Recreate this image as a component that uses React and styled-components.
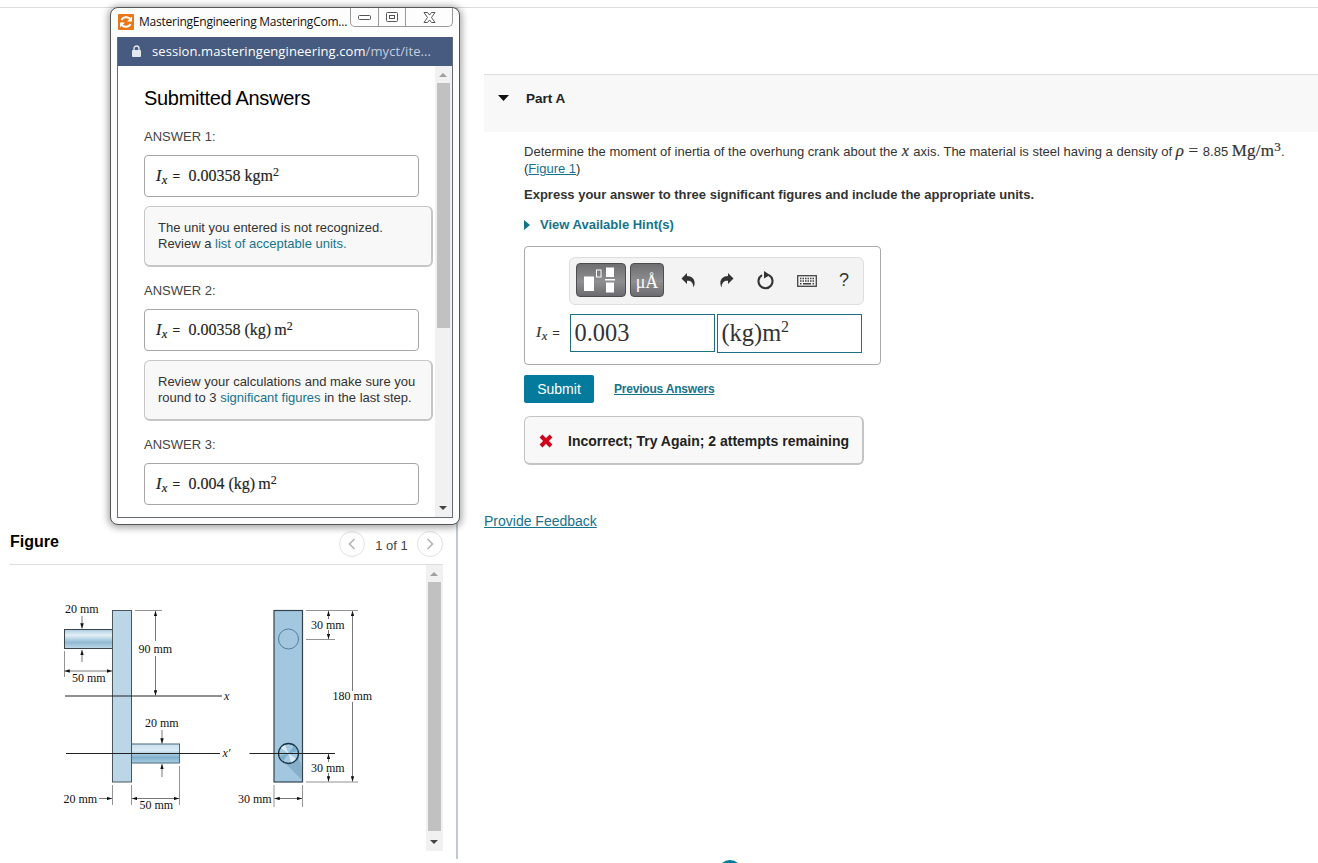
import React from "react";
import styled, { createGlobalStyle } from "styled-components";

const Global = createGlobalStyle`
  * { box-sizing: border-box; }
  body { margin: 0; background: #fff; overflow: hidden; }
`;

const sans = `"Liberation Sans", Arial, sans-serif`;
const serif = `"Liberation Serif", "Times New Roman", serif`;
const ui = `"Open Sans", "Noto Sans", sans-serif`;

const Page = styled.div`
  position: relative;
  width: 1318px;
  height: 863px;
  overflow: hidden;
  padding-top: 7px;
  background: #fff;
  font-family: ${sans};
  font-size: 13px;
  color: #333;
`;
const Columns = styled.div`
  display: flex;
  height: 856px;
  border-top: 1px solid #ddd;
`;

/* ---------- left column: figure ---------- */
const FigurePane = styled.section`
  width: 458px;
  height: 851px;
  border-right: 2px solid #bccad3;
  padding: 517px 13px 0 0;
`;
const FigureHeader = styled.header`
  display: flex;
  align-items: center;
  height: 40px;
  margin-left: 10px;
  border-bottom: 1px solid #ddd;
`;
const FigureTitle = styled.h2`
  flex: 1;
  margin: 0;
  padding-bottom: 5px;
  font: bold 16px/20px ${sans};
  color: #000;
`;
const Pager = styled.div`
  display: flex;
  align-items: center;
  margin-bottom: 2px;
  color: #444;
  span { width: 52px; text-align: center; padding: 3px 0 0 1px; }
`;
const RoundButton = styled.button`
  display: flex;
  align-items: center;
  justify-content: center;
  width: 26px;
  height: 26px;
  padding: 0;
  border: 1px solid #e2e2e2;
  border-radius: 50%;
  background: #fff;
`;
const FigureBody = styled.div`
  display: flex;
  height: 286px;
`;
const Track = styled.div`
  display: flex;
  flex-direction: column;
  align-items: center;
  justify-content: space-between;
  flex: none;
  width: 17px;
  height: 100%;
  background: #f1f1f1;
`;
const Thumb = styled.div`
  width: 13px;
  height: ${(p) => p.$h}px;
  background: #c1c1c1;
  margin-bottom: auto;
`;
const ArrowCell = styled.div`
  display: flex;
  align-items: center;
  justify-content: center;
  height: 17px;
  padding: 0 1px ${(p) => (p.$low ? 0 : 1)}px 0;
`;

/* ---------- right column: question ---------- */
const Question = styled.main`
  flex: 1;
  padding: 66px 0 0 26px;
`;
const PartHeader = styled.header`
  display: flex;
  align-items: flex-start;
  gap: 17px;
  height: 58px;
  padding: 14px 0 0 14px;
  background: #f8f8f8;
  border-top: 1px solid #ddd;
  svg { margin-top: 6px; }
  h1 { margin: 0; font: bold 13.5px/20px ${sans}; color: #222; }
`;
const PartBody = styled.div`
  padding: 10px 0 0 40px;
`;
const Prompt = styled.p`
  margin: 0;
  height: 35px;
  line-height: 17px;
  letter-spacing: 0.01px;
  white-space: nowrap;
`;
const Link = styled.a`
  color: #16738c;
  text-decoration: ${(p) => (p.$plain ? "none" : "underline")};
  font-size: ${(p) => p.$size || 13}px;
  font-weight: ${(p) => (p.$bold ? "bold" : "normal")};
  letter-spacing: ${(p) => (p.$bold ? "-0.2px" : "normal")};
`;
const Instruction = styled.p`
  margin: 9px 0 0;
  font-weight: bold;
  line-height: 17px;
`;
const Hint = styled.div`
  display: flex;
  align-items: center;
  gap: 10px;
  margin-top: 13px;
  font-weight: bold;
  line-height: 17px;
  color: #16738c;
`;
const AnswerPanel = styled.div`
  width: 357px;
  height: 119px;
  margin-top: 13px;
  padding: 10px 0 0 44px;
  border: 1px solid #aaa;
  border-radius: 4px;
`;
const Toolbar = styled.div`
  display: flex;
  align-items: center;
  width: 295px;
  height: 48px;
  padding: 0 6px 2px;
  background: #f3f3f3;
  border: 1px solid #dedede;
  border-radius: 6px;
`;
const DarkButton = styled.button`
  display: flex;
  align-items: center;
  justify-content: center;
  width: ${(p) => p.$w}px;
  height: 34px;
  margin-right: 4px;
  padding: ${(p) => (p.$glyph ? "4px 0 0" : 0)};
  border: 1px solid #4d4d4f;
  border-radius: 4px;
  background: linear-gradient(#6f6f72, #8f8f92 55%, #6c6c70);
  color: #fff;
  font: 18px/28px ${serif};
`;
const Tools = styled.div`
  display: flex;
  flex: 1;
  align-items: center;
  padding-left: 13px;
  font-size: 18px;
  color: #333;
  svg { flex: none; margin-right: ${(p) => p.$gap}px; }
`;
const EntryRow = styled.div`
  display: flex;
  align-items: flex-start;
  margin: 9px 0 0 -33px;
`;
const EntryLabel = styled.span`
  width: 34px;
  padding-top: 9px;
  font: 15px/18px ${serif};
  white-space: nowrap;
`;
const Entry = styled.div`
  width: 145px;
  height: ${(p) => p.$h || 38}px;
  margin-right: 2px;
  padding: 0 3.5px;
  border: 1px solid #1d6f84;
  font: 24.4px/36px ${serif};
  sup { font-size: 16px; line-height: 0; vertical-align: 9px; }
`;
const Actions = styled.div`
  display: flex;
  align-items: center;
  gap: 20px;
  margin-top: 10px;
`;
const Submit = styled.button`
  width: 70px;
  height: 28px;
  padding: 0;
  border: 0;
  border-radius: 2px;
  background: #047a9c;
  color: #fff;
  font: 14px ${sans};
`;
const Verdict = styled.div`
  display: flex;
  align-items: center;
  gap: 15px;
  width: 340px;
  height: 49px;
  margin-top: 13px;
  padding: 1px 0 0 14px;
  background: #f8f8f8;
  border: 1px solid #c4c4c4;
  border-width: 1px 2px 2px 1px;
  border-radius: 6px;
  font: bold 14px/16px ${sans};
  color: #222;
  white-space: nowrap;
`;
const Feedback = styled.div`
  margin-top: 48px;
  line-height: 17px;
`;
const HelpBubble = styled.div`
  position: absolute;
  left: 718px;
  top: 860px;
  width: 24px;
  height: 24px;
  border-radius: 50%;
  background: #047a9c;
`;

/* ---------- popup browser window ---------- */
const Popup = styled.div`
  position: absolute;
  left: 110px;
  top: 7px;
  width: 350px;
  height: 518px;
  padding: 0 6px;
  background: #fdfdfd;
  border: 1px solid #555;
  border-radius: 8px;
  box-shadow: 0 1px 7px 2px rgba(0, 0, 0, 0.34);
`;
const TitleBar = styled.div`
  display: flex;
  height: 29px;
  padding-left: 1px;
  font: 12px/27px ${ui};
  letter-spacing: -0.24px;
  color: #111;
  white-space: nowrap;
  & > svg { margin: 6px 5px 0 0; flex: none; }
  & > span { flex: 1; min-width: 0; }
`;
const WindowButtons = styled.div`
  display: flex;
  flex: none;
  width: 103px;
  height: 19px;
  border: 1px solid #999;
  border-top: 0;
  border-radius: 0 0 5px 5px;
`;
const WindowButton = styled.div`
  display: flex;
  align-items: center;
  justify-content: center;
  width: ${(p) => p.$w}px;
  & + & { border-left: 1px solid #999; }
`;
const Client = styled.div`
  height: 481px;
  background: #fff;
  border: 1px solid #666b73;
  border-top: 0;
  overflow: hidden;
`;
const Address = styled.div`
  display: flex;
  align-items: center;
  gap: 11px;
  height: 29px;
  padding: 0 0 1px 14px;
  background: #465b7f;
  color: #fff;
  font: 13px/28px ${ui};
  letter-spacing: 0.09px;
  white-space: nowrap;
  em { font-style: normal; color: #c5cedd; }
`;
const Scroller = styled.div`
  display: flex;
  height: 451px;
`;
const Answers = styled.div`
  flex: 1;
  min-width: 0;
  padding: 20px 0 0 26px;
  h2 { margin: 0; font: 20px/24px ${sans}; color: #000; letter-spacing: -0.3px; }
`;
const AnswerItem = styled.section`
  height: 154px;
  padding-top: 19px;
  h3 { margin: 0; font: 13px/16px ${sans}; color: #444; }
`;
const Given = styled.div`
  display: flex;
  align-items: center;
  width: 275px;
  height: 42px;
  margin-top: 10px;
  padding: 0 0 1px 11px;
  border: 1px solid #a6a6a6;
  border-radius: 4px;
  font: 16px/18px ${serif};
  color: #222;
  -webkit-text-stroke: 0.15px;
  sup { font-size: 12px; line-height: 0; vertical-align: 5.5px; }
`;
const Note = styled.div`
  width: 289px;
  height: 61px;
  margin-top: 9px;
  padding: 13px 13px 0;
  background: #f8f8f8;
  border: 1px solid #c6c6c6;
  border-width: 1px 2px 2px 1px;
  border-radius: 6px;
  font: 13px/16px ${sans};
  white-space: nowrap;
`;
const Sym = styled.i`
  font-family: ${serif};
  font-size: ${(p) => p.$size || 16}px;
  -webkit-text-stroke: 0.2px;
  margin: 0 ${(p) => p.$m || 0}px;
  sub { font-size: 12.5px; line-height: 0; vertical-align: -3px; margin-left: 0.5px; }
`;
const Eq = styled.span`
  font-family: ${sans};
  font-size: 13px;
  margin: 0 ${(p) => p.$r ?? 8.5}px 0 5px;
`;
const Unit = styled.span`
  font-family: ${serif};
  font-size: 17px;
  line-height: 0;
  letter-spacing: ${(p) => p.$ls || 0}px;
  margin: 0 ${(p) => p.$m || 0}px;
  -webkit-text-stroke: 0.2px;
  sup { font-size: 13px; line-height: 0; vertical-align: 5px; }
`;

const Caret = ({ up, color, w = 8, h = 4 }) => (
  <svg width={w} height={h} viewBox="0 0 8 4" preserveAspectRatio="none">
    <path d={up ? "M0 4L4 0L8 4Z" : "M0 0H8L4 4Z"} fill={color} />
  </svg>
);

const Scrollbar = ({ thumb }) => (
  <Track>
    <ArrowCell $low><Caret up color="#a0a0a0" /></ArrowCell>
    <Thumb $h={thumb} />
    <ArrowCell><Caret color="#444" /></ArrowCell>
  </Track>
);

const Ix = ({ size }) => (
  <Sym $size={size}>I<sub>x</sub></Sym>
);

const answers = [
  { value: <>0.00358 kgm<sup>2</sup></>, note: <>The unit you entered is not recognized.<br />Review a <Link $plain>list of acceptable units.</Link></> },
  { value: <>0.00358 (kg)&thinsp;m<sup>2</sup></>, note: <>Review your calculations and make sure you<br />round to 3 <Link $plain>significant figures</Link> in the last step.</> },
  { value: <>0.004 (kg)&thinsp;m<sup>2</sup></> },
];

/* Dimension arrow along one axis; heads at the chosen ends. */
const Dim = ({ x1, y1, x2, y2, a, b }) => (
  <line x1={x1} y1={y1} x2={x2} y2={y2} stroke="#555" strokeWidth="0.8"
    markerStart={a ? "url(#head)" : undefined} markerEnd={b ? "url(#head)" : undefined} />
);
const Ext = ({ d }) => <path d={d} stroke="#777" strokeWidth="0.8" fill="none" />;

const Drawing = styled.svg`
  flex: 1;
  text { font: 12px ${serif}; fill: #111; }
  .axis { font-style: italic; font-size: 12px; }
`;

function CrankDrawing() {
  return (
    <Drawing width="426" height="286" viewBox="0 565 426 286">
      <defs>
        <marker id="head" viewBox="0 0 6 4" refX="6" refY="2" markerWidth="5.5" markerHeight="3.5" markerUnits="userSpaceOnUse" orient="auto-start-reverse">
          <path d="M0 0L6 2L0 4Z" fill="#111" />
        </marker>
        <linearGradient id="rod" x2="0" y2="1">
          <stop offset="0" stopColor="#a9cbdf" />
          <stop offset="0.3" stopColor="#e3f0f7" />
          <stop offset="0.68" stopColor="#8fbad3" />
          <stop offset="1" stopColor="#c0dae9" />
        </linearGradient>
        <linearGradient id="rodLow" x2="0" y2="1">
          <stop offset="0" stopColor="#c9e0ed" />
          <stop offset="0.35" stopColor="#d8eaf4" />
          <stop offset="0.7" stopColor="#7fb0cd" />
          <stop offset="1" stopColor="#acd0e4" />
        </linearGradient>
      </defs>

      {/* side view */}
      <rect x="64.5" y="629.5" width="48" height="19" fill="url(#rod)" stroke="#3c444a" />
      <rect x="131.5" y="744" width="48" height="19" fill="url(#rodLow)" stroke="#47677b" />
      <rect x="112.5" y="610.5" width="19" height="171.5" fill="#bad6e7" stroke="#4b555c" />
      <path d="M65 696H222M66 753.5H220" stroke="#222" />
      <text className="axis" x="224" y="700">x</text>
      <text className="axis" x="222.5" y="757">x′</text>

      <text x="65" y="613">20 mm</text>
      <Dim x1={82} y1={616} x2={82} y2={628.5} b />
      <Dim x1={82} y1={662} x2={82} y2={650} b />
      <Ext d="M64.5 651V677" />
      <Dim x1={64.5} y1={671} x2={112} y2={671} a b />
      <text x="72" y="682">50 mm</text>
      <Ext d="M135 610.5H162" />
      <Dim x1={155.5} y1={641} x2={155.5} y2={611} b />
      <Dim x1={155.5} y1={656} x2={155.5} y2={695.5} b />
      <text x="138.500" y="653">90 mm</text>
      <text x="145" y="727">20 mm</text>
      <Dim x1={162} y1={730} x2={162} y2={743.5} b />
      <Dim x1={162} y1={777} x2={162} y2={764} b />
      <Ext d="M112.500 785V805M131.500 785V805M179.500 766V805" />
      <text x="63.500" y="802.500">20 mm</text>
      <Dim x1={99} y1={798.5} x2={112} y2={798.5} b />
      <Dim x1={132} y1={798.5} x2={179} y2={798.5} a b />
      <text x="139.500" y="809">50 mm</text>

      {/* front view */}
      <rect x="274" y="610.500" width="28.500" height="171.500" fill="#a3c7de" stroke="#33434e" strokeWidth="1.200" />
      <path d="M285 763L302 780V767L298 756Z" fill="#86b0ca" />
      <circle cx="288.500" cy="639" r="10" fill="none" stroke="#4f7f9d" />
      <circle cx="288.500" cy="753.500" r="10" fill="#a3cae0" stroke="#1d3545" strokeWidth="1.300" />
      <path d="M288.500 753.500L281 748A9.300 9.300 0 0 1 285 745ZM288.500 753.500L296 758.500A9.300 9.300 0 0 1 291 762.500Z" fill="#d9ebf5" />
      <path d="M288.500 753.500L297.500 751A9.300 9.300 0 0 0 294 746ZM288.500 753.500L279.500 756A9.300 9.300 0 0 0 283 761Z" fill="#7aaeca" />
      <path d="M249.500 753.500H335" stroke="#222" />

      <Ext d="M306 610.500H358M306 639.500H335M306 782H358" />
      <Dim x1={328.5} y1={619} x2={328.5} y2={611} b />
      <Dim x1={328.5} y1={630} x2={328.5} y2={639} b />
      <text x="311" y="629">30 mm</text>
      <Dim x1={352.5} y1={691} x2={352.5} y2={611} b />
      <Dim x1={352.5} y1={702} x2={352.5} y2={781.5} b />
      <text x="332.500" y="700">180 mm</text>
      <Dim x1={328.5} y1={762} x2={328.5} y2={754} b />
      <Dim x1={328.5} y1={773} x2={328.5} y2={781.5} b />
      <text x="311" y="771.500">30 mm</text>
      <Ext d="M274 785V807M302.500 785V807" />
      <Dim x1={274.5} y1={798.5} x2={302} y2={798.5} a b />
      <text x="238" y="802.500">30 mm</text>
    </Drawing>
  );
}

const Chevron = ({ flip }) => (
  <svg width="8" height="12" viewBox="0 0 8 12">
    <path d={flip ? "M1.500 1L6.500 6L1.500 11" : "M6.500 1L1.500 6L6.500 11"} fill="none" stroke="#b5b5b5" strokeWidth="1.700" />
  </svg>
);

const Undo = ({ flip }) => (
  <svg width="15" height="15" viewBox="0 0 15 15">
    <path transform={flip ? "translate(15 0) scale(-1 1)" : undefined}
      d="M6 0L0.500 5.500L6 11V7.800C9.500 7.500 12 9 12.500 14.500C15.500 8.500 12.500 3 6 3Z" fill="#333" />
  </svg>
);

export default function App() {
  return (
    <Page>
      <Global />
      <Columns>
        <FigurePane>
          <FigureHeader>
            <FigureTitle>Figure</FigureTitle>
            <Pager>
              <RoundButton><Chevron /></RoundButton>
              <span>1 of 1</span>
              <RoundButton><Chevron flip /></RoundButton>
            </Pager>
          </FigureHeader>
          <FigureBody>
            <CrankDrawing />
            <Scrollbar thumb={249} />
          </FigureBody>
        </FigurePane>

        <Question>
          <PartHeader>
            <Caret color="#111" w={11} h={6} />
            <h1>Part A</h1>
          </PartHeader>
          <PartBody>
            <Prompt>
              Determine the moment of inertia of the overhung crank about the <Sym $m={0.7}>x</Sym> axis. The material is steel having a density of <Sym $size={17}>ρ</Sym> <Unit $m={1}>=</Unit> 8.85 <Unit $ls={0.2}>Mg/m<sup>3</sup></Unit>.
              <br />
              (<Link>Figure 1</Link>)
            </Prompt>
            <Instruction>Express your answer to three significant figures and include the appropriate units.</Instruction>
            <Hint>
              <svg width="6" height="10" viewBox="0 0 6 10"><path d="M0 0L6 5L0 10Z" fill="#16738c" /></svg>
              View Available Hint(s)
            </Hint>
            <AnswerPanel>
              <Toolbar>
                <DarkButton $w={50}>
                  <svg width="34" height="26" viewBox="0 0 34 26">
                    <path d="M0 9.500H10V24H0ZM22 0.500H30V10H22ZM22 15.500H30V25.500H22ZM21 12H31V13.500H21Z" fill="#fff" />
                    <rect x="12.500" y="3" width="4.500" height="7" fill="none" stroke="#fff" />
                  </svg>
                </DarkButton>
                <DarkButton $w={34} $glyph>μÅ</DarkButton>
                <Tools $gap={22.5}>
                  <Undo />
                  <Undo flip />
                  <svg width="18" height="19" viewBox="0 0 18 19">
                    <path d="M6 4.200A7 7 0 1 0 13 4.200" fill="none" stroke="#333" strokeWidth="2.100" />
                    <path d="M8 0L14 4L8 7.500Z" fill="#333" />
                  </svg>
                  <svg width="20" height="13" viewBox="0 -1 20 13">
                    <rect x="0.700" y="0.700" width="18.600" height="10.600" fill="none" stroke="#444" strokeWidth="1.300" />
                    <path d="M3 3.500H17M3 6H17" stroke="#444" strokeWidth="1.500" strokeDasharray="1.500 1" />
                    <path d="M3 8.700H4.500M6 8.700H14M15.500 8.700H17" stroke="#444" strokeWidth="1.500" />
                  </svg>
                  <span>?</span>
                </Tools>
              </Toolbar>
              <EntryRow>
                <EntryLabel><Ix size={15.5} /><Eq $r={0}>=</Eq></EntryLabel>
                <Entry>0.003</Entry>
                <Entry $h={39}>(kg)m<sup>2</sup></Entry>
              </EntryRow>
            </AnswerPanel>
            <Actions>
              <Submit>Submit</Submit>
              <Link $bold $size={12}>Previous Answers</Link>
            </Actions>
            <Verdict>
              <svg width="14" height="14" viewBox="0 0 14 14">
                <path d="M2 2L12 12M12 2L2 12" stroke="#d0021b" strokeWidth="4" />
              </svg>
              Incorrect; Try Again; 2 attempts remaining
            </Verdict>
          </PartBody>
          <Feedback><Link $size={14}>Provide Feedback</Link></Feedback>
        </Question>
      </Columns>

      <HelpBubble />

      <Popup>
        <TitleBar>
          <svg width="16" height="16" viewBox="0 0 16 16">
            <rect width="16" height="16" rx="1" fill="#e87817" />
            <path d="M13 7C12 2.500 5.500 2 3.500 6M3 9C4 13.500 10.500 14 12.500 10" fill="none" stroke="#fff" strokeWidth="1.900" />
            <path d="M14 2.500V7.500H9ZM2 13.500V8.500H7Z" fill="#fff" />
          </svg>
          <span>MasteringEngineering MasteringCom...</span>
          <WindowButtons>
            <WindowButton $w={27}>
              <svg width="13" height="6" viewBox="0 -1 13 6"><rect x="0.500" y="0.500" width="12" height="4" rx="1" fill="#fff" stroke="#555" /></svg>
            </WindowButton>
            <WindowButton $w={27}>
              <svg width="12" height="10" viewBox="0 0 12 10">
                <rect x="0.500" y="0.500" width="11" height="9" rx="1" fill="#fff" stroke="#555" />
                <rect x="3.500" y="3.500" width="5" height="3" fill="#fff" stroke="#555" />
              </svg>
            </WindowButton>
            <WindowButton $w={47}>
              <svg width="13" height="11" viewBox="0 0 13 11">
                <path d="M1 0.500H4.500L6.500 3L8.500 0.500H12L8.500 5.500L12 10.500H8.500L6.500 8L4.500 10.500H1L4.500 5.500Z" fill="#fff" stroke="#555" />
              </svg>
            </WindowButton>
          </WindowButtons>
        </TitleBar>
        <Client>
          <Address>
            <svg width="9" height="12" viewBox="0 0 9 12">
              <rect y="5" width="9" height="7" rx="1" fill="#e4e8ef" />
              <path d="M2 5.500V3.500A2.500 2.500 0 0 1 7 3.500V5.500" fill="none" stroke="#e4e8ef" strokeWidth="1.400" />
            </svg>
            <span>session.masteringengineering.com<em>/myct/ite...</em></span>
          </Address>
          <Scroller>
            <Answers>
              <h2>Submitted Answers</h2>
              {answers.map((a, i) => (
                <AnswerItem key={i}>
                  <h3>ANSWER {i + 1}:</h3>
                  <Given><Ix /><Eq>=</Eq><span>{a.value}</span></Given>
                  {a.note && <Note>{a.note}</Note>}
                </AnswerItem>
              ))}
            </Answers>
            <Scrollbar thumb={245} />
          </Scroller>
        </Client>
      </Popup>
    </Page>
  );
}
